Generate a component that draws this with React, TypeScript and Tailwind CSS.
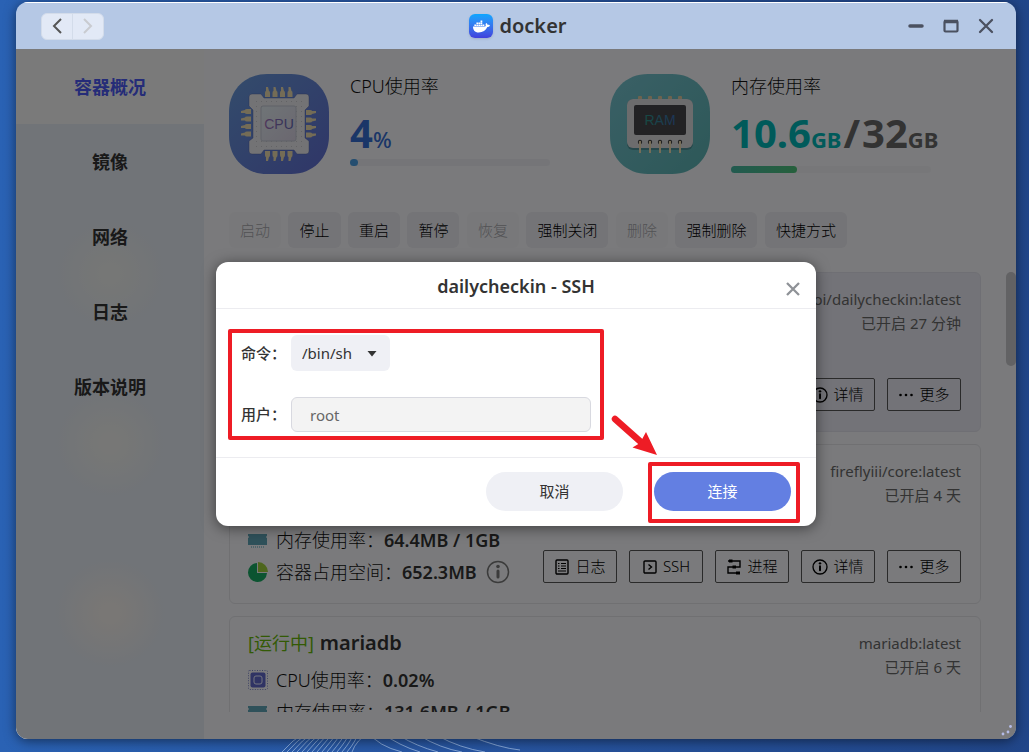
import React, { useState } from "react";
import { FaDocker } from "react-icons/fa";

const menu = ["容器概况", "镜像", "网络", "日志", "版本说明"];

const actions = [
  { label: "启动", disabled: true },
  { label: "停止" },
  { label: "重启" },
  { label: "暂停" },
  { label: "恢复", disabled: true },
  { label: "强制关闭" },
  { label: "删除", disabled: true },
  { label: "强制删除" },
  { label: "快捷方式" },
];

const containers = [
  { name: "dailycheckin", image: "sitoi/dailycheckin:latest", uptime: "已开启 27 分钟", cpu: "0.00%", mem: "21.3MB / 1GB", disk: "310.5MB", selected: true },
  { name: "firefly", image: "fireflyiii/core:latest", uptime: "已开启 4 天", cpu: "0.01%", mem: "64.4MB / 1GB", disk: "652.3MB" },
  { name: "mariadb", image: "mariadb:latest", uptime: "已开启 6 天", cpu: "0.02%", mem: "131.6MB / 1GB", disk: "401.2MB" },
];

/* ---------- icons ---------- */

const pins = [38, 45.5, 53, 60.5];

const CpuArt = () => (
  <svg viewBox="0 0 100 100" className="size-[100px] shrink-0">
    <defs>
      <linearGradient id="cpuBg" x1="0" y1="0" x2="1" y2="1">
        <stop offset="0" stopColor="#6798d8" />
        <stop offset="1" stopColor="#5f6cd0" />
      </linearGradient>
      <linearGradient id="cpuCore" x1="0" y1="0" x2="1" y2="1">
        <stop offset="0" stopColor="#dfe9ee" />
        <stop offset="1" stopColor="#d6cfe0" />
      </linearGradient>
      <linearGradient id="cpuText" x1="0" y1="0" x2="1" y2="0">
        <stop offset="0" stopColor="#a070b8" />
        <stop offset="1" stopColor="#5b62b0" />
      </linearGradient>
      <pattern id="cpuDots" width="5" height="5" patternUnits="userSpaceOnUse">
        <rect x="2" y="2" width="1" height="1" fill="#c6c6ca" />
      </pattern>
      <path id="pin" d="M-1 -9 h2 l1 4 q1 0 1 2 v4 h-5 v-4 q0 -2 1 -2z" />
    </defs>
    <path d="M38 0H62C84 0 100 16 100 38V62C100 84 84 100 62 100H38C16 100 0 84 0 62V38C0 16 16 0 38 0Z" fill="url(#cpuBg)" />
    <g fill="#e8d9ac">
      {pins.map((p) => (
        <g key={p}>
          <use href="#pin" transform={`translate(${p} 22)`} />
          <use href="#pin" transform={`translate(${p} 78) scale(1 -1)`} />
          <use href="#pin" transform={`translate(21 ${p}) rotate(-90)`} />
          <use href="#pin" transform={`translate(78 ${p}) rotate(90)`} />
        </g>
      ))}
    </g>
    <path
      d="M23 20H32L35 24H65L68 20H77Q80 20 80 23V32L76 36V64L80 67V77Q80 80 77 80H68L65 76H35L32 80H23Q20 80 20 77V67L24 64V36L20 32V23Q20 20 23 20Z"
      fill="#e6e6ea"
      stroke="#4a5aa0"
      strokeOpacity="0.4"
    />
    <path d="M25 25H75V75H25Z" fill="url(#cpuDots)" />
    <rect x="32" y="32" width="35" height="35" rx="2" fill="url(#cpuCore)" stroke="#bfc4d0" />
    <text x="50" y="55" textAnchor="middle" fontSize="14" fontFamily="Liberation Sans, sans-serif" fill="url(#cpuText)">CPU</text>
  </svg>
);

const RamArt = () => (
  <svg viewBox="0 0 100 100" className="size-[100px] shrink-0">
    <defs>
      <linearGradient id="ramBg" x1="0" y1="0" x2="1" y2="1">
        <stop offset="0" stopColor="#74c0cc" />
        <stop offset="1" stopColor="#5ab0b0" />
      </linearGradient>
      <linearGradient id="ramText" x1="0" y1="0" x2="1" y2="0">
        <stop offset="0" stopColor="#2e9486" />
        <stop offset="1" stopColor="#3a6ab0" />
      </linearGradient>
    </defs>
    <path d="M38 0H62C84 0 100 16 100 38V62C100 84 84 100 62 100H38C16 100 0 84 0 62V38C0 16 16 0 38 0Z" fill="url(#ramBg)" />
    {[30, 40, 50, 60, 70].map((x) => (
      <rect key={x} x={x - 2} y="22" width="4" height="5" rx="1" fill="#dcc69c" />
    ))}
    <rect x="17" y="25" width="66" height="51" rx="6" fill="#4d8f96" />
    <rect x="17" y="25" width="66" height="49" rx="6" fill="#d8d8da" />
    <rect x="24" y="31" width="52" height="30" rx="2" fill="#454548" />
    <text x="50" y="51" textAnchor="middle" fontSize="14" fontFamily="Liberation Sans, sans-serif" fill="url(#ramText)">RAM</text>
    {[30, 40, 50, 60, 70].map((x) => (
      <g key={x}>
        <circle cx={x} cy="68" r="2.200" fill="#444" />
        <rect x={x - 1} y="67" width="2" height="12" fill="#ead9b0" />
      </g>
    ))}
  </svg>
);

const CpuSmall = () => (
  <svg viewBox="0 0 20 20" className="size-5 shrink-0">
    <rect x="0.500" y="0.500" width="19" height="19" rx="1" fill="none" stroke="#7c86c8" strokeDasharray="1 1.500" />
    <rect x="2.500" y="2.500" width="15" height="15" rx="2" fill="#5f66c8" />
    <rect x="6" y="6" width="8" height="8" rx="2" fill="none" stroke="#e8eaff" />
  </svg>
);

const MemSmall = () => (
  <svg viewBox="0 0 20 20" className="size-5 shrink-0">
    <path d="M0 4H19V6Q17 7 19 8V15H0V8Q2 7 0 6Z" fill="#5ea2b4" />
    <path d="M3 17H16" stroke="#9cc8d4" strokeWidth="2" strokeDasharray="1 1" />
  </svg>
);

const PieSmall = () => (
  <svg viewBox="0 0 20 20" className="size-5 shrink-0">
    <path d="M9 1A9.500 9.500 0 1 0 19 11H9Z" fill="#18a862" />
    <path d="M10 0A10 10 0 0 1 20 10H10Z" fill="#9ccc3a" />
  </svg>
);

const LogIcon = () => (
  <svg viewBox="0 0 16 16" className="size-4" fill="none" stroke="currentColor">
    <rect x="2" y="1" width="12" height="14" rx="1" strokeWidth="1.400" />
    <path d="M4 4.500h1.500M7 4.500h5M4 7h1.500M7 7h5M4 9.500h1.500M7 9.500h5M4 12h8" />
  </svg>
);

const SshIcon = () => (
  <svg viewBox="0 0 16 16" className="size-4" fill="none" stroke="currentColor" strokeWidth="1.400">
    <rect x="2" y="2" width="12" height="12" rx="1" />
    <path d="M6.500 5.500L9.500 8L6.500 10.500" />
  </svg>
);

const ProcessIcon = () => (
  <svg viewBox="0 0 16 16" className="size-4" fill="none" stroke="currentColor" strokeWidth="1.400">
    <path d="M2 2H14V8H2V14H14" />
    <path d="M3 2H6.500M6.500 8H10M10 14H14" strokeWidth="2.800" />
  </svg>
);

const InfoIcon = ({ className, ring = 1.5 }: { className: string; ring?: number }) => (
  <svg viewBox="0 0 24 24" className={className} fill="none" stroke="currentColor">
    <circle cx="12" cy="12" r="10.500" strokeWidth={ring} />
    <path d="M12 11v6" strokeWidth="3" strokeLinecap="round" />
    <circle cx="12" cy="6.500" r="1.800" fill="currentColor" stroke="none" />
  </svg>
);

const MoreIcon = () => (
  <svg viewBox="0 0 16 16" className="size-4" fill="currentColor">
    <circle cx="2.500" cy="8" r="1.300" />
    <circle cx="8" cy="8" r="1.300" />
    <circle cx="13.500" cy="8" r="1.300" />
  </svg>
);

const cardActions = [
  { label: "日志", icon: <LogIcon /> },
  { label: "SSH", icon: <SshIcon /> },
  { label: "进程", icon: <ProcessIcon /> },
  { label: "详情", icon: <InfoIcon className="size-4" ring={2} /> },
  { label: "更多", icon: <MoreIcon /> },
];

/* ---------- sections ---------- */

const TitleBar = () => (
  <header className="grid h-[47px] shrink-0 grid-cols-[1fr_auto_1fr] items-center border-t border-white bg-[#b5c8e5] pl-[25px] pr-[21px]">
    <div className="flex h-[27px] w-[63px] overflow-hidden rounded-md border border-[#d3dcea] bg-[#e2e9f6]">
      <button aria-label="后退" className="flex flex-1 items-center justify-center border-r border-[#d3dcea] text-[#555]">
        <svg viewBox="0 0 10 16" className="h-4 w-[10px]" fill="none" stroke="currentColor" strokeWidth="2">
          <path d="M9 1L2 8L9 15" />
        </svg>
      </button>
      <button aria-label="前进" disabled className="flex flex-1 items-center justify-center text-[#c9cbd0]">
        <svg viewBox="0 0 10 16" className="h-4 w-[10px]" fill="none" stroke="currentColor" strokeWidth="2">
          <path d="M1 1L8 8L1 15" />
        </svg>
      </button>
    </div>
    <div className="flex items-center gap-[6px]">
      <span className="flex size-6 items-center justify-center rounded-md bg-linear-to-b from-[#08a6ff] to-[#4040dc] text-white shadow">
        <FaDocker className="size-[17px]" />
      </span>
      <h1 className="text-xl font-semibold text-[#333]">docker</h1>
    </div>
    <div className="flex items-center justify-end gap-[17px] text-[#4b5160]">
      <button aria-label="最小化">
        <svg viewBox="0 0 18 18" className="size-[18px]" stroke="currentColor" strokeWidth="3.500" strokeLinecap="round">
          <path d="M3 9H15" />
        </svg>
      </button>
      <button aria-label="最大化">
        <svg viewBox="0 0 18 18" className="size-[18px]" fill="none" stroke="currentColor">
          <rect x="2.500" y="4" width="13" height="10.500" rx="1" strokeWidth="2.200" />
          <path d="M2 4.500H16" strokeWidth="3.500" />
        </svg>
      </button>
      <button aria-label="关闭">
        <svg viewBox="0 0 18 18" className="size-[18px]" stroke="currentColor" strokeWidth="2.300" strokeLinecap="round">
          <path d="M3 3L15 15M15 3L3 15" />
        </svg>
      </button>
    </div>
  </header>
);

const Sidebar = () => (
  <nav className="w-[188px] shrink-0 bg-[#e2e8f0] bg-[radial-gradient(circle_at_94px_225px,#eceeec_10px,transparent_55px),radial-gradient(circle_at_94px_394px,#eeefec_10px,transparent_55px),radial-gradient(circle_at_94px_564px,#f2eeea_10px,transparent_55px)]">
    {menu.map((item, i) => (
      <a
        key={item}
        href="#"
        className={`flex h-[75px] items-center justify-center text-lg font-bold ${
          i === 0 ? "bg-[#f4f5f5] text-[#4a58f0]" : "text-[#333]"
        }`}
      >
        {item}
      </a>
    ))}
  </nav>
);

const Stats = () => (
  <section className="grid grid-cols-[repeat(2,381px)]">
    <div className="flex gap-[21px]">
      <CpuArt />
      <div>
        <div className="text-lg font-light leading-6 text-[#111]">CPU使用率</div>
        <div className="mt-[10px] text-[40px] font-bold leading-[50px] text-[#346cd0]">
          4<span className="text-[22px] font-medium leading-none">%</span>
        </div>
        <div className="mt-px h-[7px] w-[200px] rounded-full bg-[#ebebf1]">
          <div className="h-full rounded-full bg-[#4a9de0]" style={{ width: "4%" }} />
        </div>
      </div>
    </div>
    <div className="flex gap-[21px]">
      <RamArt />
      <div>
        <div className="text-lg font-light leading-6 text-[#111]">内存使用率</div>
        <div className="mt-[10px] whitespace-nowrap text-[40px] font-bold leading-[50px] text-[#666]">
          <span className="text-[#00b4b4]">
            10.6<span className="text-[22px] leading-none">GB</span>
          </span>
          <span className="mx-0.5">/</span>32<span className="text-[22px] leading-none">GB</span>
        </div>
        <div className="mt-2 h-[7px] w-[200px] rounded-full bg-[#efeff3]">
          <div className="h-full rounded-full bg-linear-to-r from-[#45b5a0] to-[#4cc078]" style={{ width: "33%" }} />
        </div>
      </div>
    </div>
  </section>
);

const Toolbar = () => (
  <div className="flex max-w-[618px] justify-between">
    {actions.map((a) => (
      <button
        key={a.label}
        disabled={a.disabled}
        className={`h-9 rounded-md px-[11px] text-[15px] font-light ${
          a.disabled ? "bg-[#f1f1f4] text-[#a4a4aa]" : "bg-[#e8e8ee] text-black"
        }`}
      >
        {a.label}
      </button>
    ))}
  </div>
);

type Container = (typeof containers)[number];

const ContainerCard = ({ item }: { item: Container }) => (
  <article
    className={`flex h-40 shrink-0 justify-between rounded-md border pl-[18px] pr-[19px] ${
      item.selected ? "border-[#dfdfe8] bg-[#e6e6f0]" : "border-[#e0e0e5]"
    }`}
  >
    <div className="pt-[10px] text-lg text-[#333]">
      <h2 className="flex h-8 items-center gap-[6px] font-normal text-[#66b40a]">
        [运行中] <span className="text-xl font-semibold text-[#333]">{item.name}</span>
      </h2>
      <dl className="mt-[5px] whitespace-nowrap">
        <div className="flex h-8 items-center">
          <CpuSmall />
          <dt className="ml-2 font-light text-[#111]">CPU使用率：</dt>
          <dd className="font-semibold">{item.cpu}</dd>
        </div>
        <div className="flex h-8 items-center">
          <MemSmall />
          <dt className="ml-2 font-light text-[#111]">内存使用率：</dt>
          <dd className="font-semibold">{item.mem}</dd>
        </div>
        <div className="flex h-8 items-center">
          <PieSmall />
          <dt className="ml-2 font-light text-[#111]">容器占用空间：</dt>
          <dd className="flex items-center gap-[9px] font-semibold">
            {item.disk}
            <InfoIcon className="size-6 text-[#777]" />
          </dd>
        </div>
      </dl>
    </div>
    <div className="flex flex-col items-end justify-between pb-5 pt-[14px] text-[#666]">
      <div className="text-right text-[15px] leading-6">
        <p>{item.image}</p>
        <p>{item.uptime}</p>
      </div>
      <div className="flex gap-3">
        {cardActions.map((a) => (
          <button
            key={a.label}
            className="flex h-[33px] w-[74px] items-center justify-center gap-[5px] rounded-xs border border-[#555] text-[15px] font-light text-black"
          >
            {a.icon}
            {a.label}
          </button>
        ))}
      </div>
    </div>
  </article>
);

const SshDialog = () => {
  const [command, setCommand] = useState("/bin/sh");
  const [user, setUser] = useState("root");

  return (
    <form
      role="dialog"
      aria-label="dailycheckin - SSH"
      className="relative w-[600px] rounded-xl bg-white text-[15px] text-[#333] shadow-[0_2px_14px_rgba(0,0,0,0.5)]"
      onSubmit={(e) => e.preventDefault()}
    >
      <div className="flex h-[47px] items-center border-b border-[#ececf0] px-[15px]">
        <h2 className="flex-1 pl-4 pt-0.5 text-center text-lg font-semibold">dailycheckin - SSH</h2>
        <button type="button" aria-label="关闭" className="mt-2 text-[#8f9297]">
          <svg viewBox="0 0 16 16" className="size-4" stroke="currentColor" strokeWidth="2.300">
            <path d="M2 2L14 14M14 2L2 14" />
          </svg>
        </button>
      </div>

      <div className="flex flex-col gap-[26px] px-[25px] pb-[25px] pt-[26px]">
        <div className="flex items-center">
          <label htmlFor="command" className="w-[50px] whitespace-nowrap font-medium">命令：</label>
          <div className="relative">
            <select
              id="command"
              value={command}
              onChange={(e) => setCommand(e.target.value)}
              className="h-9 w-[99px] appearance-none rounded-md bg-[#eff0f5] pl-[11px] outline-none"
            >
              <option>/bin/sh</option>
              <option>/bin/bash</option>
            </select>
            <svg viewBox="0 0 10 6" className="pointer-events-none absolute right-[13px] top-4 h-[6px] w-[10px]" fill="#333">
              <path d="M0.500 0H9.500L5 5.500Z" />
            </svg>
          </div>
        </div>
        <div className="flex items-center">
          <label htmlFor="user" className="w-[50px] whitespace-nowrap font-medium">用户：</label>
          <input
            id="user"
            value={user}
            onChange={(e) => setUser(e.target.value)}
            className="h-[35px] w-[300px] rounded-md border border-[#d8d9e0] bg-[#f3f3f3] px-[18px] text-[#666] outline-none"
          />
        </div>
      </div>

      <div className="flex justify-end gap-[31px] border-t border-[#ececf0] px-[25px] pb-[15px] pt-[14px]">
        <button type="button" className="h-[39px] w-[137px] rounded-full bg-[#eff0f5]">取消</button>
        <button type="submit" className="h-[39px] w-[137px] rounded-full bg-[#637fe2] text-white">连接</button>
      </div>

      {/* highlight marks */}
      <div className="pointer-events-none absolute left-3 top-[67px] h-[111px] w-[376px] rounded-xs border-4 border-[#ee1c25]" />
      <div className="pointer-events-none absolute left-[432px] top-[200px] h-[61px] w-[152px] rounded-xs border-4 border-[#ee1c25]" />
      <svg viewBox="0 0 50 44" className="pointer-events-none absolute left-[394px] top-[152px] h-11 w-[50px]" fill="#ee1c25">
        <path d="M5 5L32 29" stroke="#ee1c25" strokeWidth="6.500" strokeLinecap="round" />
        <path d="M47 41L22.500 33.500L30 29L36 18Z" />
      </svg>
    </form>
  );
};

const App = () => {
  return (
    <div className="relative flex h-screen flex-col overflow-hidden bg-linear-to-r from-[#2a62b4] via-[#27549f] to-[#214689] pb-[13px] pl-4 pr-[13px] pt-0.5 font-['Noto_Sans','Noto_Sans_CJK_SC',sans-serif]">
      {/* wallpaper waves */}
      <svg viewBox="0 0 300 40" className="absolute bottom-0 left-[280px] h-10 w-[300px]" fill="none" stroke="#a9c4ea" strokeOpacity="0.7">
        {Array.from({ length: 14 }, (_, i) => (
          <path key={i} d={`M${2 + i * 5} 40Q${12 + i * 5} 28 ${26 + i * 4} 20`} />
        ))}
        <path d="M72 40Q76 28 90 20M88 20Q98 34 122 40M100 20Q120 34 140 40M120 24Q136 34 158 40M140 24Q160 36 182 40M158 24Q180 36 205 40M190 24Q220 36 240 38" />
      </svg>

      <div className="relative flex min-h-0 flex-1 flex-col overflow-hidden rounded-xl shadow-[0_2px_12px_rgba(0,0,0,0.5)]">
        <TitleBar />
        <div className="relative flex min-h-0 flex-1 bg-[#f4f5f8]">
          <Sidebar />
          <main className="flex min-w-0 flex-1 flex-col pb-[27px] pl-[25px] pt-[25px]">
            <Stats />
            <div className="mb-6 mt-[38px]">
              <Toolbar />
            </div>
            <div className="flex min-h-0 flex-1">
              <div className="flex min-w-0 flex-1 flex-col gap-3 overflow-hidden">
                {containers.map((c) => (
                  <ContainerCard key={c.name} item={c} />
                ))}
              </div>
              <div className="ml-[25px] w-[10px] shrink-0">
                <div className="h-[94px] rounded-full bg-[#c4c4c8]" />
              </div>
            </div>
          </main>

          <div className="absolute inset-0 flex items-center justify-center bg-black/50">
            <SshDialog />
          </div>
          <svg viewBox="0 0 12 12" className="absolute bottom-[3px] right-[3px] size-3" fill="#b4bce8">
            <circle cx="2" cy="10" r="1.400" />
            <circle cx="7" cy="8" r="1.400" />
            <circle cx="9.500" cy="2.500" r="1.400" />
          </svg>
        </div>
      </div>
    </div>
  );
};

export default App;
